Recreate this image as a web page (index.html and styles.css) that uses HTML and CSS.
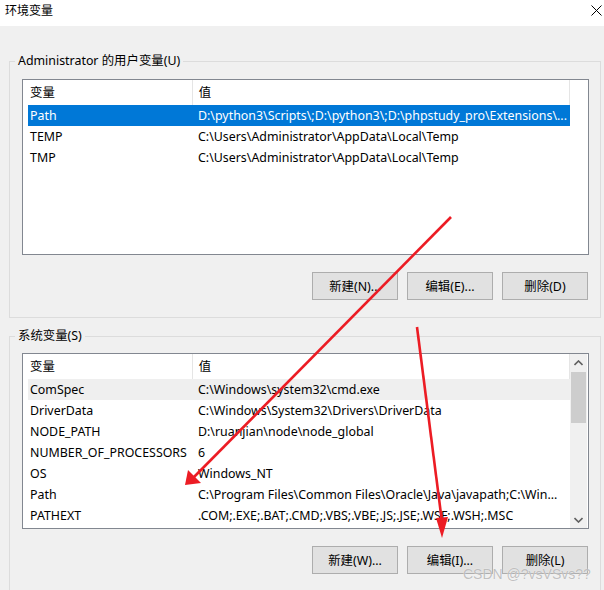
FILE: index.html
```html
<!DOCTYPE html>
<html lang="zh-CN">
<head>
<meta charset="UTF-8">
<title>环境变量</title>
<link rel="stylesheet" href="styles.css">
</head>
<body>

<div class="title-bar">
    <span class="title-text">环境变量</span>
    <svg class="close-icon" width="11" height="11" viewBox="0 0 11 11">
        <path d="M0.5 0.5 L10.5 10.5 M10.5 0.5 L0.5 10.5" stroke="#000" stroke-width="1" fill="none"/>
    </svg>
</div>

<div class="dialog-body">
    <!-- 用户变量 -->
    <fieldset class="group group-user">
        <legend>Administrator 的用户变量(U)</legend>
        <div class="list-box">
            <div class="list-main">
                <div class="list-header">
                    <div class="head-name">变量</div>
                    <div class="head-value">值</div>
                </div>
                <div class="list-row selected">
                    <div class="cell-name">Path</div>
                    <div class="cell-value">D:\python3\Scripts\;D:\python3\;D:\phpstudy_pro\Extensions\...</div>
                </div>
                <div class="list-row">
                    <div class="cell-name">TEMP</div>
                    <div class="cell-value">C:\Users\Administrator\AppData\Local\Temp</div>
                </div>
                <div class="list-row">
                    <div class="cell-name">TMP</div>
                    <div class="cell-value">C:\Users\Administrator\AppData\Local\Temp</div>
                </div>
            </div>
        </div>
        <div class="btn-row">
            <button class="win-btn">新建(N)...</button>
            <button class="win-btn">编辑(E)...</button>
            <button class="win-btn">删除(D)</button>
        </div>
    </fieldset>

    <!-- 系统变量 -->
    <fieldset class="group group-system">
        <legend>系统变量(S)</legend>
        <div class="list-box">
            <div class="list-main">
                <div class="list-header">
                    <div class="head-name">变量</div>
                    <div class="head-value">值</div>
                </div>
                <div class="list-row hover">
                    <div class="cell-name">ComSpec</div>
                    <div class="cell-value">C:\Windows\system32\cmd.exe</div>
                </div>
                <div class="list-row">
                    <div class="cell-name">DriverData</div>
                    <div class="cell-value">C:\Windows\System32\Drivers\DriverData</div>
                </div>
                <div class="list-row">
                    <div class="cell-name">NODE_PATH</div>
                    <div class="cell-value">D:\ruanjian\node\node_global</div>
                </div>
                <div class="list-row">
                    <div class="cell-name">NUMBER_OF_PROCESSORS</div>
                    <div class="cell-value">6</div>
                </div>
                <div class="list-row">
                    <div class="cell-name">OS</div>
                    <div class="cell-value">Windows_NT</div>
                </div>
                <div class="list-row">
                    <div class="cell-name">Path</div>
                    <div class="cell-value">C:\Program Files\Common Files\Oracle\Java\javapath;C:\Win...</div>
                </div>
                <div class="list-row">
                    <div class="cell-name">PATHEXT</div>
                    <div class="cell-value">.COM;.EXE;.BAT;.CMD;.VBS;.VBE;.JS;.JSE;.WSF;.WSH;.MSC</div>
                </div>
            </div>
            <div class="scrollbar">
                <div class="scroll-arrow">
                    <svg width="9" height="6" viewBox="0 0 9 6"><path d="M0.5 5 L4.5 1 L8.5 5" stroke="#606060" stroke-width="1.6" fill="none"/></svg>
                </div>
                <div class="scroll-track">
                    <div class="scroll-thumb"></div>
                </div>
                <div class="scroll-arrow">
                    <svg width="9" height="6" viewBox="0 0 9 6"><path d="M0.5 1 L4.5 5 L8.5 1" stroke="#606060" stroke-width="1.6" fill="none"/></svg>
                </div>
            </div>
        </div>
        <div class="btn-row">
            <button class="win-btn">新建(W)...</button>
            <button class="win-btn">编辑(I)...</button>
            <button class="win-btn">删除(L)</button>
        </div>
    </fieldset>
</div>

<!-- 标注的红色箭头 -->
<svg class="arrow-layer" width="604" height="590" viewBox="0 0 604 590">
    <line x1="451" y1="217" x2="194" y2="477" stroke="#ec1c24" stroke-width="2.6"/>
    <polygon points="185,485 188,470 201,483" fill="#ec1c24"/>
    <line x1="417" y1="327" x2="442" y2="522" stroke="#ec1c24" stroke-width="2.6"/>
    <polygon points="442,538 436,518 448,517" fill="#ec1c24"/>
</svg>

<div class="watermark">CSDN @?vsVSvs??</div>

</body>
</html>
```

FILE: styles.css
```css
html, body {
    margin: 0;
    padding: 0;
    overflow: hidden;
}

body {
    width: 604px;
    height: 590px;
    position: relative;
    background-color: #f0f0f0;
    font-family: "Noto Sans", "Noto Sans CJK SC", sans-serif;
    font-size: 12.4px;
    color: #000;
}

.title-bar {
    height: 26px;
    background-color: #fff;
    display: flex;
    align-items: center;
    justify-content: space-between;
    padding: 0 2px 0 5px;
    font-size: 12px;
}

.title-text {
    line-height: 16px;
    margin-top: -4px;
}

.close-icon {
    margin-top: -6px;
}

.dialog-body {
    padding-top: 27px;
}

/* 分组框 */
.group {
    margin: 0 3px 0 9px;
    padding: 10px 11px 17px 12px;
    border: 1px solid #dcdcdc;
    min-width: 0;
}

.group legend {
    margin-left: -7px;
    padding: 0 3px;
    line-height: 16px;
    color: #000;
}

.group-system {
    margin-top: 10px;
    padding-top: 9px;
}

/* 列表 */
.list-box {
    width: 567px;
    height: 176px;
    box-sizing: border-box;
    border: 1px solid #828790;
    background-color: #fff;
    display: flex;
    overflow: hidden;
}

.list-main {
    width: 547px;
    flex: none;
}

.list-header {
    display: flex;
    height: 25px;
    line-height: 25px;
}

.head-name {
    width: 162px;
    padding-left: 7px;
    border-right: 1px solid #e5e5e5;
}

.head-value {
    width: 371px;
    padding-left: 6px;
    border-right: 1px solid #e5e5e5;
}

.list-row {
    display: grid;
    grid-template-columns: 163px 1fr;
    margin-left: 5px;
    width: 542px;
    height: 21px;
    line-height: 21px;
    white-space: nowrap;
}

.list-row.selected {
    background-color: #0078d7;
    color: #fff;
}

.list-row.hover {
    background-color: #efefef;
}

.cell-name {
    padding-left: 2px;
    overflow: hidden;
}

.cell-value {
    padding-left: 7px;
    overflow: hidden;
}

/* 滚动条 */
.scrollbar {
    width: 17px;
    flex: none;
    display: flex;
    flex-direction: column;
    background-color: #f0f0f0;
}

.scroll-arrow {
    height: 17px;
    display: flex;
    align-items: center;
    justify-content: center;
}

.scroll-track {
    flex: 1;
}

.scroll-thumb {
    margin: 1px 1px 0 1px;
    height: 51px;
    background-color: #cdcdcd;
}

/* 按钮 */
.btn-row {
    display: flex;
    justify-content: flex-end;
    gap: 9px;
    margin-top: 17px;
    padding-right: 1px;
}

.win-btn {
    width: 86px;
    height: 28px;
    box-sizing: border-box;
    border: 1px solid #adadad;
    background-color: #e1e1e1;
    font-family: inherit;
    font-size: 12.4px;
    color: #000;
    padding: 0;
}

/* 覆盖层 */
.arrow-layer {
    position: absolute;
    left: 0;
    top: 0;
    pointer-events: none;
}

.watermark {
    position: absolute;
    left: 463px;
    top: 566px;
    font-family: "Liberation Sans", Arial, sans-serif;
    font-size: 14px;
    color: rgba(140, 140, 140, 0.55);
    text-shadow: 0 0 1px #fff;
    white-space: nowrap;
}
```
